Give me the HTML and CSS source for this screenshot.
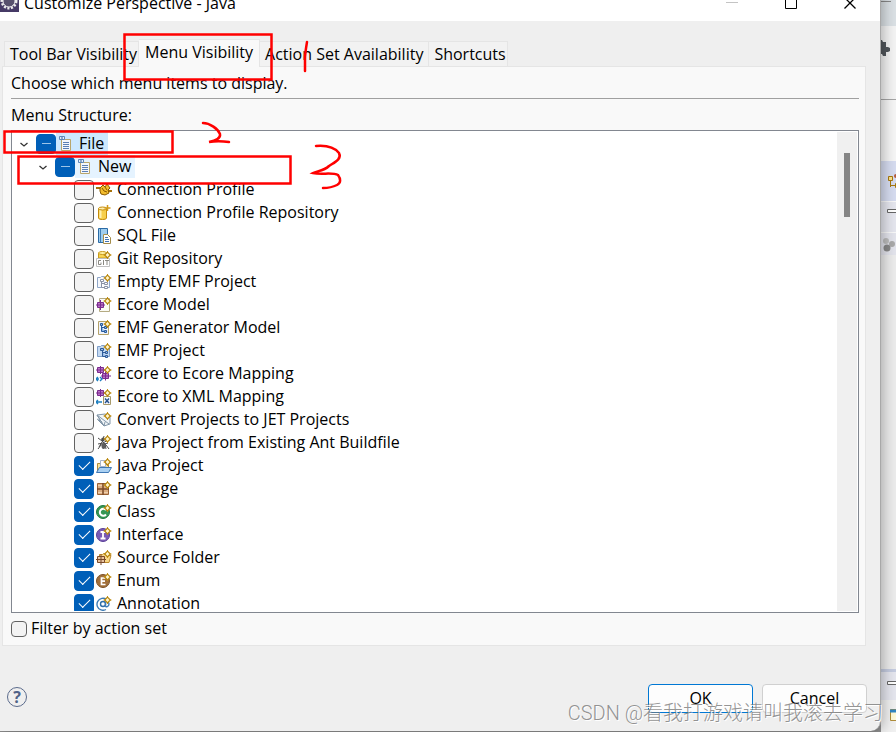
FILE: index.html
```html
<!DOCTYPE html>
<html lang="en">

<head>
    <title>Customize Perspective - Java</title>

    <meta http-equiv="Content-Type" content="text/html;charset=UTF-8">
    <meta name="viewport" content="width=device-width, initial-scale=1.0">

    <link rel="stylesheet" href="styles.css">
</head>

<body>
    <!-- shared icons -->
    <svg class="sprite" aria-hidden="true">
        <symbol id="spark" viewBox="0 0 16 16">
            <path d="M11.500 0v8M7.500 4h8" stroke="#c99a2e" fill="none" />
            <path d="M11.500 1.200L14.300 4 11.500 6.800 8.700 4z" fill="#fff6d0" stroke="#b8860b" stroke-width="1.200" />
        </symbol>
        <symbol id="menu" viewBox="0 0 16 16">
            <path d="M3.500 3.500h9v11h-9z" fill="#f5f7fb" stroke="#b9a66c" />
            <path d="M1.500.5h5v3h-5z" fill="#e8f0fb" stroke="#5d86b8" />
            <path d="M3 2h2" stroke="#2c5f9e" />
            <path d="M5 6.500h6M5 8.500h6M5 10.500h6M5 12.500h6" stroke="#5b7fb5" />
        </symbol>
        <symbol id="profile" viewBox="0 0 16 16">
            <path d="M0 6h4M11 9h5" stroke="#a8720a" stroke-width="2" />
            <path d="M4 6l3-3 2 2 2-3 3 4-2 2 1 3-4 2-4-1-1-3z" fill="#f2bc2e" stroke="#8a5a00" />
            <path d="M6 6l2 3 3 1M9 5l2 3" fill="none" stroke="#8a5a00" />
        </symbol>
        <symbol id="database" viewBox="0 0 16 16">
            <path d="M2.500 3.500v9.500c0 2 8 2 8 0V3.500" fill="#f7cf4b" stroke="#c48a0a" />
            <path d="M4.500 5v8" stroke="#fff0b0" stroke-width="2" />
            <ellipse cx="6.500" cy="3.500" rx="4" ry="1.500" fill="#fff0b0" stroke="#c48a0a" />
            <path d="M11.500 0v6M8.500 3h6" stroke="#d29a1a" stroke-width="1.500" />
        </symbol>
        <symbol id="sql" viewBox="0 0 16 16">
            <path d="M2.500.5h9v14h-9z" fill="#9fcdee" stroke="#2b6ba6" />
            <path d="M4.500 1v13" stroke="#3d7fb8" />
            <path d="M7.500 6.500h4l3 3v6h-7z" fill="#fff" stroke="#a58d4a" />
            <path d="M9 9.500h3M9 11.500h4M9 13.500h4" stroke="#3f74b5" />
        </symbol>
        <symbol id="git" viewBox="0 0 16 16">
            <path d="M2.500 2v5h8V2z" fill="#f8d452" stroke="#c89a1c" />
            <ellipse cx="6.500" cy="2" rx="4" ry="1.500" fill="#fff1a8" stroke="#c89a1c" />
            <path d="M.5 7.500h13v8H.5z" fill="#fff" stroke="#c0c0c0" />
            <path d="M5 9.500H2.500v4H5v-2M7.500 9v5M9 9.500h4M11 9.500V14" fill="none" stroke="#8a8982" />
            <use href="#spark" />
        </symbol>
        <symbol id="emf-empty" viewBox="0 0 16 16">
            <path d="M1.500 3.500h3l1-1h3v1h5v10h-12z" fill="#f4f7fc" stroke="#8fa6c8" />
            <path d="M4.500 5.500h3v2h-3zM8.500 8.500h3v2h-3zM8.500 12.500h3v2h-3zM5.500 8v5.500h3M5.500 9.500h3" fill="#fff" stroke="#8b92a5" />
            <use href="#spark" />
        </symbol>
        <symbol id="ecore" viewBox="0 0 16 16">
            <path d="M3.500 1.500h10v13h-10z" fill="#fbfbf5" stroke="#b5ab83" />
            <path d="M1.500 5.500h6v5h-6z" fill="#b973c6" stroke="#7b2b8f" />
            <path d="M4.500 3v10M0 8h9" stroke="#7b2b8f" />
            <use href="#spark" />
        </symbol>
        <symbol id="generator" viewBox="0 0 16 16">
            <path d="M2.500 1.500h10v13h-10z" fill="#eef3fb" stroke="#b5a26a" />
            <path d="M4.500 3.500h2v2h-2zM8.500 6.500h2v2h-2zM8.500 10.500h2v2h-2zM5.500 6v5.500h3M5.500 7.500h3" fill="#8db5e6" stroke="#285a9c" />
            <use href="#spark" />
        </symbol>
        <symbol id="emf" viewBox="0 0 16 16">
            <path d="M1.500 3.500h3l1-1h3v1h5v10h-12z" fill="#c3d9f2" stroke="#7f9ec9" />
            <path d="M4.500 5.500h3v2h-3zM9.500 8.500h2v2h-2zM9.500 12.500h2v2h-2zM6.500 8v5.500h3M6.500 9.500h3" fill="#9bbde8" stroke="#2f5b99" />
            <use href="#spark" />
        </symbol>
        <symbol id="mapping" viewBox="0 0 16 16">
            <path d="M1.500 1.500h6v5h-6zM6.500 7.500h6v5h-6z" fill="#b973c6" stroke="#7b2b8f" />
            <path d="M4.500 0v8M0 4h9M9.500 5.500v9M5 10h10" stroke="#7b2b8f" />
            <path d="M0 13h3M2 11l-2 2 2 2" fill="none" stroke="#1d7fc0" stroke-width="1.400" />
            <path d="M4 11l2 2-2 2" fill="none" stroke="#1d7fc0" stroke-width="1.400" />
            <use href="#spark" />
        </symbol>
        <symbol id="xml" viewBox="0 0 16 16">
            <path d="M1.500 1.500h6v5h-6z" fill="#b973c6" stroke="#7b2b8f" />
            <path d="M4.500 0v8M0 4h9" stroke="#7b2b8f" />
            <path d="M7.500 7.500h7v8h-7z" fill="#f5f7fc" stroke="#a89a6a" />
            <path d="M9 9.500l4 4.500M13 9.500L9 14" stroke="#26508c" stroke-width="1.400" />
            <path d="M0 13h6M2 11l-2 2 2 2" fill="none" stroke="#1d7fc0" stroke-width="1.400" />
            <use href="#spark" />
        </symbol>
        <symbol id="jet" viewBox="0 0 16 16">
            <path d="M1 3l8-1 5 2v8l-6 2z" fill="#f1f5f8" stroke="#8296a8" />
            <path d="M1 3l12 9M1 3l7 11M2 8l6 6 1-4M1 7l5 3" fill="none" stroke="#8296a8" />
            <use href="#spark" />
        </symbol>
        <symbol id="ant" viewBox="0 0 16 16">
            <path d="M2 3l4 3 4 4 3 4M12 5L7 8l-5 1M8 1L7 5M2 14l3-4 7-2M3 12l3-5M10 14l-1-5" fill="none" stroke="#4c4c4c" />
            <ellipse cx="7" cy="4.500" rx="1.800" ry="2" fill="#4c4c4c" />
            <ellipse cx="7.500" cy="11" rx="2" ry="3" fill="#5c5c5c" />
            <use href="#spark" />
        </symbol>
        <symbol id="java-project" viewBox="0 0 16 16">
            <path d="M1.500 13.500v-8h3l1-1h3v2h4v3" fill="#f6e3a1" stroke="#b08d3a" />
            <path d="M4.500 2.500h5v6h-5z" fill="#fff" stroke="#a7b4c8" />
            <path d="M.5 14.500l3-5h12l-3 5z" fill="#a9d0f2" stroke="#3f78b5" />
            <use href="#spark" />
        </symbol>
        <symbol id="package" viewBox="0 0 16 16">
            <path d="M1.500 2.500h11v11h-11z" fill="#dcae82" stroke="#9a6236" />
            <path d="M7 2v12M1 8h12" stroke="#7a4a28" stroke-width="1.500" />
            <path d="M2 4.500h4M8 11.500h4M2 11.500h4" stroke="#efd0ae" />
            <use href="#spark" />
        </symbol>
        <symbol id="class" viewBox="0 0 16 16">
            <circle cx="7" cy="8" r="6.500" fill="#359653" stroke="#1f7a3f" />
            <path d="M10 6a3.500 3.500 0 1 0 0 4.500" fill="none" stroke="#fff" stroke-width="2" />
            <use href="#spark" />
        </symbol>
        <symbol id="interface" viewBox="0 0 16 16">
            <circle cx="7" cy="8" r="6.500" fill="#7a5bb5" stroke="#5a3f96" />
            <path d="M4.500 5h5M4.500 11.500h5M7 5v6" stroke="#fff" stroke-width="1.800" />
            <use href="#spark" />
        </symbol>
        <symbol id="source-folder" viewBox="0 0 16 16">
            <path d="M3.500 12.500v-8h3l1-1h3l1 2h3.500l-2 7z" fill="#f8d888" stroke="#c08a2a" />
            <path d="M1.500 6.500h7v6h-7z" fill="#e8c3a0" stroke="#7a4a28" />
            <path d="M5 4.500V15M0 9.500h10" stroke="#7a4a28" />
            <use href="#spark" />
        </symbol>
        <symbol id="enum" viewBox="0 0 16 16">
            <circle cx="7" cy="8" r="6.500" fill="#a1703c" stroke="#7c5125" />
            <path d="M9.500 5h-4v6.500h4M5.500 8.200H9" fill="none" stroke="#fff" stroke-width="1.700" />
            <use href="#spark" />
        </symbol>
        <symbol id="annotation" viewBox="0 0 16 16">
            <circle cx="7" cy="8" r="2.500" fill="none" stroke="#2f6ea8" stroke-width="1.400" />
            <path d="M9.500 5.500V10c0 1.500 3.500 1 3.500-2a6 6 0 1 0-3 5.500" fill="none" stroke="#3f7cb5" stroke-width="1.400" />
            <use href="#spark" />
        </symbol>
    </svg>

    <div class="dialog">
        <header class="titlebar">
            <svg class="titlebar-icon" width="19" height="18" viewBox="0 0 19 18">
                <path d="M0 0h19v18H0z" fill="#463a66" />
                <circle cx="9" cy="7" r="7" fill="#6c6580" stroke="#eee" stroke-width="3" stroke-dasharray="2 1.500" />
                <circle cx="9" cy="7" r="6" fill="#57506d" stroke="#e6e3ea" />
            </svg>
            <h1>Customize Perspective - Java</h1>
            <div class="window-buttons">
                <button type="button" aria-label="Minimize"><svg width="12" height="12"><path d="M0 5.500h12" stroke="#c4c4c4" /></svg></button>
                <button type="button" aria-label="Maximize"><svg width="12" height="12"><path d="M.5.5h11v11H.5z" fill="none" stroke="#000" /></svg></button>
                <button type="button" aria-label="Close"><svg width="12" height="12"><path d="M.5.5l11 11M11.500.5l-11 11" stroke="#000" stroke-width="1.300" /></svg></button>
            </div>
        </header>

        <main>
            <nav class="tabs">
                <button type="button">Tool Bar Visibility</button>
                <button type="button" class="active">Menu Visibility</button>
                <button type="button">Action Set Availability</button>
                <button type="button">Shortcuts</button>
            </nav>
            <section class="panel">
                <p class="intro">Choose which menu items to display.</p>
                <h2>Menu Structure:</h2>
                <div class="tree">
                    <ul>
                        <li class="level-0">
                            <svg class="chevron" viewBox="0 0 16 16"><path d="M4.500 7l3.500 3L11.500 7" /></svg>
                            <input type="checkbox" id="file" class="partial">
                            <label for="file" class="selected"><svg class="icon"><use href="#menu" /></svg>File</label>
                        </li>
                        <li class="level-1">
                            <svg class="chevron" viewBox="0 0 16 16"><path d="M4.500 7l3.500 3L11.500 7" /></svg>
                            <input type="checkbox" id="new" class="partial">
                            <label for="new" class="hovered"><svg class="icon"><use href="#menu" /></svg>New</label>
                        </li>
                        <li><input type="checkbox" id="m1"><label for="m1"><svg class="icon"><use href="#profile" /></svg>Connection Profile</label></li>
                        <li><input type="checkbox" id="m2"><label for="m2"><svg class="icon"><use href="#database" /></svg>Connection Profile Repository</label></li>
                        <li><input type="checkbox" id="m3"><label for="m3"><svg class="icon"><use href="#sql" /></svg>SQL File</label></li>
                        <li><input type="checkbox" id="m4"><label for="m4"><svg class="icon"><use href="#git" /></svg>Git Repository</label></li>
                        <li><input type="checkbox" id="m5"><label for="m5"><svg class="icon"><use href="#emf-empty" /></svg>Empty EMF Project</label></li>
                        <li><input type="checkbox" id="m6"><label for="m6"><svg class="icon"><use href="#ecore" /></svg>Ecore Model</label></li>
                        <li><input type="checkbox" id="m7"><label for="m7"><svg class="icon"><use href="#generator" /></svg>EMF Generator Model</label></li>
                        <li><input type="checkbox" id="m8"><label for="m8"><svg class="icon"><use href="#emf" /></svg>EMF Project</label></li>
                        <li><input type="checkbox" id="m9"><label for="m9"><svg class="icon"><use href="#mapping" /></svg>Ecore to Ecore Mapping</label></li>
                        <li><input type="checkbox" id="m10"><label for="m10"><svg class="icon"><use href="#xml" /></svg>Ecore to XML Mapping</label></li>
                        <li><input type="checkbox" id="m11"><label for="m11"><svg class="icon"><use href="#jet" /></svg>Convert Projects to JET Projects</label></li>
                        <li><input type="checkbox" id="m12"><label for="m12"><svg class="icon"><use href="#ant" /></svg>Java Project from Existing Ant Buildfile</label></li>
                        <li><input type="checkbox" id="m13" checked><label for="m13"><svg class="icon"><use href="#java-project" /></svg>Java Project</label></li>
                        <li><input type="checkbox" id="m14" checked><label for="m14"><svg class="icon"><use href="#package" /></svg>Package</label></li>
                        <li><input type="checkbox" id="m15" checked><label for="m15"><svg class="icon"><use href="#class" /></svg>Class</label></li>
                        <li><input type="checkbox" id="m16" checked><label for="m16"><svg class="icon"><use href="#interface" /></svg>Interface</label></li>
                        <li><input type="checkbox" id="m17" checked><label for="m17"><svg class="icon"><use href="#source-folder" /></svg>Source Folder</label></li>
                        <li><input type="checkbox" id="m18" checked><label for="m18"><svg class="icon"><use href="#enum" /></svg>Enum</label></li>
                        <li><input type="checkbox" id="m19" checked><label for="m19"><svg class="icon"><use href="#annotation" /></svg>Annotation</label></li>
                    </ul>
                    <div class="scrollbar"><div class="thumb"></div></div>
                </div>
                <div class="filter">
                    <input type="checkbox" id="filter">
                    <label for="filter">Filter by action set</label>
                </div>
            </section>
        </main>

        <footer>
            <button type="button" class="help" aria-label="Help">?</button>
            <button type="button" class="btn btn--default">OK</button>
            <button type="button" class="btn">Cancel</button>
        </footer>
    </div>

    <!-- the workbench showing behind the dialog -->
    <aside class="workbench">
        <div class="wb-title"><svg width="15" height="26"><path d="M0 1.500h10" stroke="#888" /></svg></div>
        <div class="wb-toolbar"><svg width="15" height="73"><path d="M0 14h1l1 2h3v5h2l2 1v3l-2 1H5v4H2l-1-2H0z" fill="#52575c" /></svg></div>
        <div class="wb-blank"></div>
        <div class="wb-perspective"><svg width="15" height="40"><path d="M7.500 15.500h4v4h-4zM14.500 22.500h4v4h-4z" fill="#fbe38c" stroke="#a8780f" /><path d="M9.500 20v6M10 24.500h4" stroke="#a8780f" /><circle cx="15" cy="15" r="2" fill="#b55a3c" /></svg></div>
        <div class="wb-tab"><svg width="15" height="30"><path d="M6.500 7.500h12v3h-12z" fill="#fff" stroke="#666" /></svg></div>
        <div class="wb-tools"><svg width="15" height="22"><circle cx="5" cy="8" r="3" fill="#bbb" /><circle cx="11" cy="11" r="3" fill="#aaa" /><circle cx="6" cy="15" r="3.500" fill="#888" /></svg></div>
        <div class="wb-editor"></div>
        <div class="wb-tab wb-tab--bottom"><svg width="15" height="28"><path d="M6.500 9.500h12v3h-12z" fill="#fff" stroke="#666" /></svg></div>
        <div class="wb-console"><svg width="15" height="30"><path d="M9.500 9.500h9v11h-9z" fill="#fff9d8" stroke="#b08d3a" /><path d="M9 11h6" stroke="#3186c4" stroke-width="3" /></svg></div>
    </aside>

    <!-- hand-drawn steps -->
    <svg class="marks" width="360" height="200" aria-hidden="true">
        <path d="M124.500 34.500h147v45h-147zM4.500 131.500h168v21h-168zM18.500 156.500h272v27h-272z" />
        <path d="M307 42c-1 6-2 12-2 16v13" />
        <path d="M203 123c7 0 15 6 17 11 1 5-6 7-11 8 6-1 13-1 20 0" />
        <path d="M316 146c12-1 19 2 23 7 3 6-4 9-10 13-5 5-12 5-16 7 8 2 20-1 25 2 3 4 3 8-1 10-4 2-9 3-14 3" />
    </svg>
    <div class="watermark">CSDN @看我打游戏请叫我滚去学习</div>
</body>

</html>
```

FILE: styles.css
```css
* {
    box-sizing: border-box;
}

body {
    display: flex;
    height: 100vh;
    margin: 0;
    overflow: hidden;
    background-color: #8f8f8f;
    color: #000;
    font-family: "Open Sans", "Noto Sans", sans-serif;
    font-size: 16px;
    line-height: 23px;
}

button {
    padding: 0;
    border: none;
    background: none;
    color: inherit;
    font: inherit;
}

h1,
h2,
p,
ul {
    margin: 0;
    padding: 0;
    font-size: 16px;
    font-weight: normal;
}

.sprite {
    position: absolute;
    width: 0;
    height: 0;
}

/* Dialog: its title bar starts above the top of the window */
.dialog {
    z-index: 1;
    display: flex;
    flex: 1;
    flex-direction: column;
    min-width: 0;
    margin: -15px 0 1px;
    border-right: 1px solid #a8a8a8;
    border-radius: 0 0 10px 0;
    background-color: #efefef;
    box-shadow: 2px 0 14px rgba(0, 0, 0, 0.3);
}

.titlebar {
    display: flex;
    flex: none;
    align-items: center;
    height: 36px;
    background-color: #fff;
}

.titlebar-icon {
    margin-right: 5px;
}

.window-buttons {
    display: flex;
    gap: 47px;
    margin-left: auto;
    padding-right: 24px;
}

.window-buttons svg {
    display: block;
}

main {
    display: flex;
    flex: 1;
    flex-direction: column;
    min-height: 0;
    padding: 18px 14px 0 2px;
}

.tabs {
    position: relative;
    display: flex;
    align-items: flex-end;
    margin: 0 0 -1px 2px;
}

.tabs button {
    height: 26px;
    padding: 0 5px;
    border: 1px solid #e5e5e5;
    border-left-width: 0;
    background-color: #f2f2f2;
    white-space: nowrap;
}

.tabs button:first-child {
    padding-right: 1px;
    border-left-width: 1px;
}

.tabs button:last-child {
    padding-right: 1px;
}

.tabs .active {
    height: 28px;
    padding: 0 6px 2px;
    border-bottom: none;
    background-color: #f9f9f9;
}

.panel {
    display: flex;
    flex: 1;
    flex-direction: column;
    min-height: 0;
    padding: 5px 6px 5px 8px;
    border: 1px solid #e5e5e5;
    background-color: #f9f9f9;
}

.intro {
    padding-bottom: 3px;
    border-bottom: 1px solid #a0a0a0;
}

.panel h2 {
    padding: 5px 0 3px;
}

.tree {
    display: flex;
    flex: 1;
    min-height: 0;
    padding: 1px;
    border: 1px solid #828790;
    background-color: #fff;
}

.tree ul {
    flex: 1;
    overflow: hidden;
    list-style: none;
}

.tree li {
    display: flex;
    align-items: center;
    height: 23px;
    padding-left: 61px;
}

.tree .level-0 {
    padding-left: 3px;
}

.tree .level-1 {
    padding-left: 22px;
}

.tree label {
    display: flex;
    align-items: center;
    gap: 5px;
    padding: 0 4px 0 2px;
    white-space: nowrap;
}

.selected {
    background-color: #cce8ff;
}

.hovered {
    background-color: #e5f3ff;
}

.icon {
    width: 16px;
    height: 16px;
}

.chevron {
    width: 16px;
    height: 16px;
    margin-right: 4px;
    fill: none;
    stroke: #333;
    stroke-width: 1.3;
}

input[type="checkbox"] {
    display: flex;
    flex: none;
    align-items: center;
    justify-content: center;
    width: 20px;
    height: 20px;
    margin: 0;
    border: 1px solid #626262;
    border-radius: 4px;
    background-color: #f3f3f3;
    appearance: none;
}

input[type="checkbox"]:checked,
input[type="checkbox"].partial {
    border-color: #005fb8;
    background-color: #005fb8;
}

input[type="checkbox"]:checked::before {
    content: "";
    width: 10px;
    height: 5px;
    margin-bottom: 3px;
    border: solid #fff;
    border-width: 0 0 1px 1px;
    transform: rotate(-45deg);
}

input[type="checkbox"].partial::before {
    content: "";
    width: 9px;
    height: 1px;
    background-color: #9cc4e8;
}

.scrollbar {
    width: 20px;
    padding: 21px 7px;
    background-color: #f0f0f0;
}

.thumb {
    height: 64px;
    background-color: #858585;
}

.filter {
    display: flex;
    align-items: center;
    gap: 4px;
    padding-top: 4px;
}

.filter input[type="checkbox"] {
    width: 16px;
    height: 16px;
}

footer {
    display: flex;
    align-items: center;
    gap: 9px;
    padding: 38px 13px 18px 7px;
}

.help {
    width: 20px;
    height: 20px;
    margin: 0 auto 4px 0;
    border: 1px solid #5b6b8c;
    border-radius: 50%;
    color: #4f6288;
    font-weight: bold;
    line-height: 18px;
}

.btn {
    width: 105px;
    height: 29px;
    border: 1px solid #d0d0d0;
    border-radius: 4px;
    background-color: #fdfdfd;
}

.btn--default {
    border-color: #0078d4;
}

/* Workbench strip */
.workbench {
    display: flex;
    flex-direction: column;
    width: 15px;
    background-color: #ececec;
}

.workbench svg {
    display: block;
}

.wb-title {
    height: 26px;
    background-color: #dbe1e5;
}

.wb-toolbar {
    height: 73px;
    background-color: #f4f4f4;
}

.wb-blank {
    height: 62px;
    border-top: 1px solid #a5a5a5;
    background-color: #f6f6f6;
}

.wb-perspective {
    height: 40px;
    background-color: #d6dcf0;
}

.wb-tab {
    height: 31px;
    border-top: 1px solid #f8f8f8;
    background-color: #e5e6ee;
}

.wb-tab--bottom {
    border-top: 3px solid #c5cce0;
}

.wb-tools {
    height: 23px;
    border-top: 1px solid #f8f8f8;
    background-color: #e3e4ec;
}

.wb-editor {
    flex: 1;
}

.wb-console {
    height: 32px;
    background-color: #f0f0f0;
}

/* Drawn over the dialog */
.marks {
    position: absolute;
    z-index: 2;
    top: 0;
    left: 0;
    fill: none;
    stroke: #f00;
    stroke-linecap: round;
    stroke-width: 2.5;
    pointer-events: none;
}

.watermark {
    position: absolute;
    z-index: 3;
    right: 13px;
    bottom: 7px;
    color: rgba(120, 120, 120, 0.8);
    font-family: Roboto, "Noto Sans CJK SC", sans-serif;
    font-size: 20px;
    font-weight: 300;
    text-shadow: 1px 1px 0 #fff;
    white-space: nowrap;
    pointer-events: none;
}
```
